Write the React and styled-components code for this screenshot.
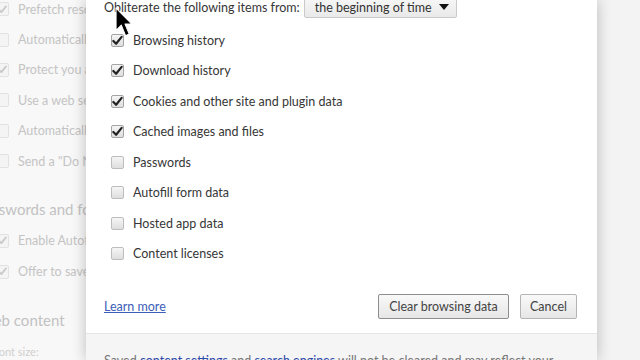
import React from 'react';
import styled, { createGlobalStyle } from 'styled-components';

// estilos globales de la pagina //
const GlobalStyle = createGlobalStyle`
  html, body {
    margin: 0;
    padding: 0;
    width: 640px;
    height: 360px;
    overflow: hidden;
    background: #f7f7f7;
    font-family: Lato, "Noto Sans", Arial, sans-serif;
  }
`;

const Screen = styled.div`
  position: relative;
  display: flex;
  width: 640px;
  height: 360px;
  overflow: hidden;
`;

// pagina de fondo, apagada detras del dialogo //
const BgPage = styled.div`
  width: 86px;
  flex-shrink: 0;
  overflow: hidden;
  background: #f8f8f8;
  color: #c4c4c4;
  font-size: 12.5px;
`;

const BgList = styled.div`
  margin-left: -5px;
  margin-top: -6px;
  display: flex;
  flex-direction: column;
`;

const BgRow = styled.div`
  height: ${p => p.$h || 30.4}px;
  display: flex;
  align-items: center;
  gap: 9px;
  white-space: nowrap;
`;

const BgBox = styled.span`
  width: 12px;
  height: 12px;
  flex-shrink: 0;
  border: 1px solid #e2e2e2;
  border-radius: 2px;
  background: #f4f4f4;
  display: flex;
  align-items: center;
  justify-content: center;
`;

const BgHeader = styled.div`
  height: ${p => p.$h}px;
  box-sizing: border-box;
  padding-bottom: ${p => p.$pb || 0}px;
  display: flex;
  align-items: ${p => p.$align || 'center'};
  font-size: ${p => p.$size || 15}px;
  white-space: nowrap;
  margin-left: ${p => p.$shift || 0}px;
  color: ${p => p.$color || '#c2c2c2'};
`;

// el dialogo //
const Dialog = styled.div`
  width: 511px;
  flex-shrink: 0;
  display: flex;
  flex-direction: column;
  background: #ffffff;
  box-shadow: 0 0 14px rgba(0, 0, 0, 0.24);
  color: #363636;
  font-size: 12.5px;
  z-index: 1;
`;

const Body = styled.div`
  padding: 0 20px 14px 18px;
  display: flex;
  flex-direction: column;
`;

const TitleRow = styled.div`
  margin-top: -4px;
  height: 22px;
  display: flex;
  align-items: center;
  gap: 4px;
`;

const Select = styled.div`
  width: 153px;
  height: 22px;
  box-sizing: border-box;
  border: 1px solid #cacaca;
  border-radius: 2px;
  background: linear-gradient(#f8f8f8, #e9e9e9);
  display: flex;
  align-items: center;
  justify-content: space-between;
  padding: 0 7px 0 10px;
  color: #333;
`;

const Arrow = styled.span`
  width: 0;
  height: 0;
  border-left: 5px solid transparent;
  border-right: 5px solid transparent;
  border-top: 6px solid #111;
`;

const List = styled.div`
  margin-top: 6.75px;
  margin-left: 7px;
  display: flex;
  flex-direction: column;
`;

const Row = styled.label`
  height: 30.57px;
  display: flex;
  align-items: center;
  gap: 9px;
`;

const Box = styled.span`
  width: 13px;
  height: 13px;
  box-sizing: border-box;
  border: 1px solid ${p => (p.$checked ? '#a4a4a4' : '#bdbdbd')};
  border-radius: 2px;
  background: linear-gradient(#f6f6f6, #dedede);
  display: flex;
  align-items: center;
  justify-content: center;
`;

const Actions = styled.div`
  margin-top: 24.75px;
  height: 25px;
  display: flex;
  align-items: center;
`;

const Link = styled.a`
  color: #3c5db8;
  text-decoration: underline;
  margin-right: auto;
`;

const Button = styled.button`
  height: 25px;
  width: ${p => p.$w}px;
  margin-left: ${p => p.$gap || 0}px;
  box-sizing: border-box;
  border: 1px solid ${p => (p.$primary ? '#8e8e8e' : '#b4b4b4')};
  border-radius: 2px;
  background: linear-gradient(#f9f9f9, #e6e6e6);
  color: #444;
  font-family: inherit;
  font-size: 12.5px;
  padding: 0;
`;

const Footer = styled.div`
  flex: 1;
  background: #f5f5f5;
  border-top: 1px solid #e6e6e6;
  padding: 19px 20px 0 18px;
  color: #777;
  white-space: nowrap;
`;

const FootLink = styled.span`
  color: #2d4aa8;
`;

const RightSide = styled.div`
  flex: 1;
  background: #f3f3f3;
`;

// cursor del raton, encima de todo //
const Cursor = styled.svg`
  position: absolute;
  left: 115px;
  top: 7px;
  z-index: 5;
`;

function Check({ size = 11, color = '#222' }) {
  return (
    <svg width={size} height={size} viewBox="0 0 12 12">
      <path d="M1.5 6.5 L4.5 9.5 L10.5 2" fill="none" stroke={color} strokeWidth="2.4" strokeLinecap="round" strokeLinejoin="round" />
    </svg>
  );
}

const bgRows = [
  { t: 'Prefetch resources to load pages more quickly', c: true },
  { t: 'Automatically send some system information', c: false },
  { t: 'Protect you and your device from dangerous sites', c: true },
  { t: 'Use a web service to help resolve spelling errors', c: false },
  { t: 'Automatically send usage statistics', c: false },
  { t: 'Send a "Do Not Track" request', c: false },
];

const items = [
  { t: 'Browsing history', c: true },
  { t: 'Download history', c: true },
  { t: 'Cookies and other site and plugin data', c: true },
  { t: 'Cached images and files', c: true },
  { t: 'Passwords', c: false },
  { t: 'Autofill form data', c: false },
  { t: 'Hosted app data', c: false },
  { t: 'Content licenses', c: false },
];

export default function App() {
  return (
    <>
      <GlobalStyle />
      <Screen>
        <BgPage>
          <BgList>
            {bgRows.map(r => (
              <BgRow key={r.t}>
                <BgBox>{r.c && <Check size={9} color="#c8c8c8" />}</BgBox>
                {r.t}
              </BgRow>
            ))}
            <BgHeader $h={49} $pb={7} $shift={-19} $align="flex-end">Passwords and forms</BgHeader>
            <BgRow $h={31}>
              <BgBox><Check size={9} color="#c8c8c8" /></BgBox>Enable Autofill
            </BgRow>
            <BgRow $h={31}>
              <BgBox><Check size={9} color="#c8c8c8" /></BgBox>Offer to save passwords
            </BgRow>
            <BgHeader $h={42} $shift={-16} $align="flex-end">Web content</BgHeader>
            <BgHeader $h={44} $size={11} $shift={-2} $color="#cfcfcf">Font size:</BgHeader>
          </BgList>
        </BgPage>

        <Dialog>
          <Body>
            <TitleRow>
              Obliterate the following items from:
              <Select>
                the beginning of time
                <Arrow />
              </Select>
            </TitleRow>
            <List>
              {items.map(i => (
                <Row key={i.t}>
                  <Box $checked={i.c}>{i.c && <Check />}</Box>
                  {i.t}
                </Row>
              ))}
            </List>
            <Actions>
              <Link href="#">Learn more</Link>
              <Button $w={131} $primary>Clear browsing data</Button>
              <Button $w={57} $gap={11}>Cancel</Button>
            </Actions>
          </Body>
          <Footer>
            Saved <FootLink>content settings</FootLink> and <FootLink>search engines</FootLink> will not be cleared and may reflect your
          </Footer>
        </Dialog>

        <RightSide />

        <Cursor width="19" height="32" viewBox="0 0 18 30">
          <path d="M1 1 L1 22 L6 17 L10 27 L13.5 25.5 L9.5 16 L16 16 Z" fill="#000" stroke="#fff" strokeWidth="1" strokeLinejoin="round" />
        </Cursor>
      </Screen>
    </>
  );
}
